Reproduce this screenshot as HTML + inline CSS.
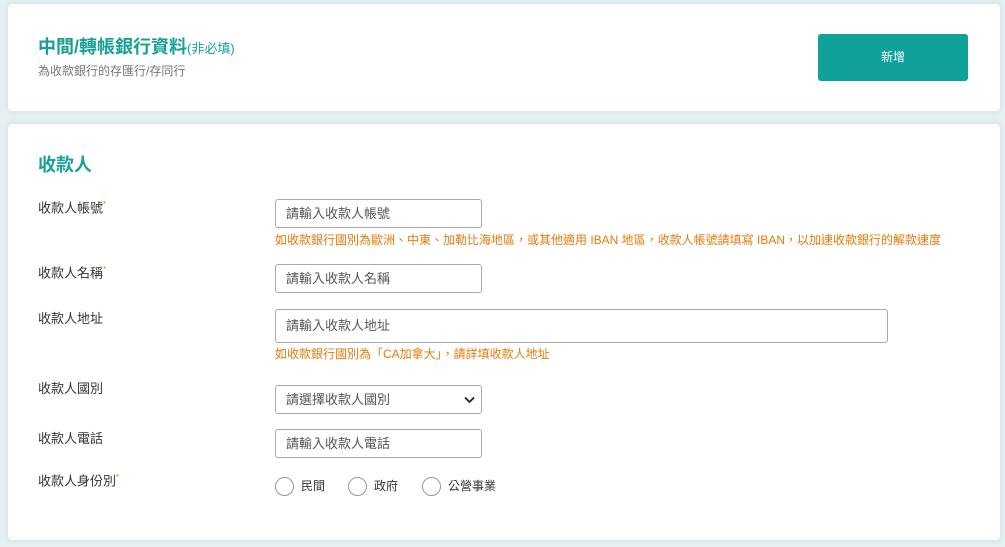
<!DOCTYPE html>
<html><head><meta charset="utf-8"><style>
*{box-sizing:border-box;margin:0;padding:0}
body{width:1005px;height:547px;background:#e6f0f2;font-family:"Liberation Sans","Noto Sans CJK TC",sans-serif;position:relative;overflow:hidden;color:#333}
.card{position:absolute;background:#fff;border-radius:4px;box-shadow:0 0 6px rgba(150,190,200,.35)}
.a{position:absolute;white-space:nowrap;line-height:1.2}
.lab{font-size:13px;color:#333}
.lab sup{color:#e67e22;font-size:8px}
.inp{position:absolute;border:1px solid #aaa;border-radius:3px;height:29px;font-size:13px;color:#555;padding:0 10px;line-height:27px}
.hint{font-size:12px;color:#e87a0a}
.r{position:absolute;width:19px;height:19px;border:1px solid #999;border-radius:50%}
</style></head><body>
<div class="card" style="left:8px;top:4px;width:992px;height:107px"></div>
<div class="a" style="left:38px;top:37px;font-size:18px;font-weight:bold;color:#16a096">中間/轉帳銀行資料<span style="font-size:13px;font-weight:normal">(非必填)</span></div>
<div class="a" style="left:38px;top:64px;font-size:12px;color:#777">為收款銀行的存匯行/存同行</div>
<div class="a" style="left:818px;top:34px;width:150px;height:47px;background:#0fa19a;border-radius:3px;color:#fff;font-size:12px;text-align:center;line-height:47px">新增</div>

<div class="card" style="left:8px;top:124px;width:992px;height:416px"></div>
<div class="a" style="left:38px;top:155px;font-size:18px;font-weight:bold;color:#16a096">收款人</div>

<div class="a lab" style="left:38px;top:200px">收款人帳號<sup>*</sup></div>
<div class="inp" style="left:275px;top:199px;width:207px">請輸入收款人帳號</div>
<div class="a hint" style="left:275px;top:233px">如收款銀行國別為歐洲、中東、加勒比海地區，或其他適用 IBAN 地區，收款人帳號請填寫 IBAN，以加速收款銀行的解款速度</div>

<div class="a lab" style="left:38px;top:265px">收款人名稱<sup>*</sup></div>
<div class="inp" style="left:275px;top:264px;width:207px">請輸入收款人名稱</div>

<div class="a lab" style="left:38px;top:311px">收款人地址</div>
<div class="inp" style="left:275px;top:309px;width:613px;height:34px;line-height:32px">請輸入收款人地址</div>
<div class="a hint" style="left:275px;top:347px">如收款銀行國別為「CA加拿大」，請詳填收款人地址</div>

<div class="a lab" style="left:38px;top:381px">收款人國別</div>
<div class="inp" style="left:275px;top:385px;width:207px">請選擇收款人國別
<svg style="position:absolute;right:6px;top:10px" width="11" height="8" viewBox="0 0 11 8"><path d="M1 1.5 5.5 6 10 1.5" fill="none" stroke="#222" stroke-width="1.8"/></svg></div>

<div class="a lab" style="left:38px;top:431px">收款人電話</div>
<div class="inp" style="left:275px;top:429px;width:207px">請輸入收款人電話</div>

<div class="a lab" style="left:38px;top:473px">收款人身份別<sup>*</sup></div>
<div class="r" style="left:275px;top:477px"></div><div class="a lab" style="left:301px;top:479px;font-size:12px">民間</div>
<div class="r" style="left:348px;top:477px"></div><div class="a lab" style="left:374px;top:479px;font-size:12px">政府</div>
<div class="r" style="left:422px;top:477px"></div><div class="a lab" style="left:448px;top:479px;font-size:12px">公營事業</div>
</body></html>
